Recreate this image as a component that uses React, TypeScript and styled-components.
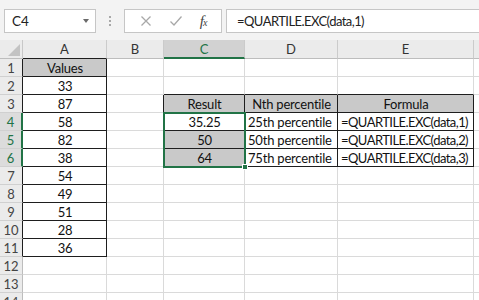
import React from "react";
import styled, { createGlobalStyle, css } from "styled-components";

const GREEN = "#217346";
const GRID = "#dadada";
const DARK = "#1e1e1e";
const FILL = "#c9c9c9";

const GlobalStyle = createGlobalStyle`
  html, body { margin: 0; padding: 0; background: #fff; overflow: hidden; }
  body { font-family: Lato, "Liberation Sans", Arial, sans-serif; }
  * { box-sizing: border-box; }
`;

const Page = styled.div`
  width: 479px;
  height: 300px;
  display: flex;
  flex-direction: column;
  overflow: hidden;
`;

const Toolbar = styled.div`
  height: 40px;
  flex: none;
  background: #f3f3f3;
  display: flex;
  align-items: flex-start;
  padding: 9px 0 0 4px;
`;

const Box = styled.div`
  height: 24px;
  background: #fff;
  border: 1px solid #c6c6c6;
  display: flex;
  align-items: center;
`;

const NameBox = styled(Box)`
  width: 92px;
  padding: 0 6px 0 7px;
  justify-content: space-between;
  font-size: 13.5px;
  color: #222;
`;

const Caret = styled.span`
  width: 0;
  height: 0;
  border-left: 3.5px solid transparent;
  border-right: 3.5px solid transparent;
  border-top: 4px solid #6a6a6a;
`;

const Separator = styled.div`
  width: 28px;
  height: 24px;
  display: flex;
  flex-direction: column;
  align-items: center;
  justify-content: center;
  gap: 2px;
`;

const Dot = styled.span`
  width: 2px;
  height: 2px;
  background: #a8a8a8;
`;

const FxButtons = styled(Box)`
  width: 98px;
  justify-content: space-around;
  padding: 0 6px;
`;

const FxLabel = styled.span`
  font-family: "Liberation Serif", "Times New Roman", serif;
  font-style: italic;
  font-size: 15px;
  color: #444;
  letter-spacing: -1px;
  small { font-size: 10px; }
`;

const FormulaInput = styled(Box)`
  flex: 1;
  margin-left: 4px;
  border-right: none;
  padding-left: 10px;
  font-size: 13px;
  letter-spacing: -0.55px;
  color: #222;
`;

const Sheet = styled.div`
  display: grid;
  grid-template-columns: 23px 84px 57px 81px 93px 136px 64px;
  grid-template-rows: 19px repeat(14, 18px);
  font-size: 13px;
`;

const Corner = styled.div`
  grid-row: 1;
  grid-column: 1;
  background: #ebebeb;
  border-right: 1px solid #c8c8c8;
  border-bottom: 1px solid #bdbdbd;
  position: relative;
  &::after {
    content: "";
    position: absolute;
    right: 2px;
    bottom: 2px;
    width: 0;
    height: 0;
    border-left: 12px solid transparent;
    border-bottom: 12px solid #c3c3c3;
  }
`;

const ColHead = styled.div<{ $c: number; $sel?: boolean; $dark?: boolean }>`
  grid-row: 1;
  grid-column: ${(p) => p.$c + 1};
  background: #ebebeb;
  color: #333;
  display: flex;
  align-items: center;
  justify-content: center;
  border-right: 1px solid #cbcbcb;
  border-bottom: 1px solid ${(p) => (p.$dark ? DARK : "#bdbdbd")};
  ${(p) =>
    p.$sel &&
    css`
      background: #d2d2d2;
      color: ${GREEN};
      border-bottom: 2px solid ${GREEN};
    `}
`;

const RowHead = styled.div<{ $r: number; $sel?: boolean; $dark?: boolean }>`
  grid-row: ${(p) => p.$r + 1};
  grid-column: 1;
  background: #ebebeb;
  color: #444;
  display: flex;
  align-items: center;
  justify-content: center;
  border-bottom: 1px solid #d0d0d0;
  border-right: 1px solid ${(p) => (p.$dark ? DARK : "#bdbdbd")};
  ${(p) =>
    p.$sel &&
    css`
      background: #dcdcdc;
      color: ${GREEN};
      border-right: 2px solid ${GREEN};
    `}
`;

const Cell = styled.div<{
  $r: number;
  $c: number;
  $fill?: boolean;
  $align: "left" | "center";
  $condensed?: boolean;
  $rightDark: boolean;
  $bottomDark: boolean;
}>`
  grid-row: ${(p) => p.$r + 1};
  grid-column: ${(p) => p.$c + 1};
  background: ${(p) => (p.$fill ? FILL : "#fff")};
  color: #111;
  line-height: 17px;
  white-space: nowrap;
  overflow: hidden;
  letter-spacing: ${(p) => (p.$condensed ? "-0.55px" : "-0.2px")};
  text-align: ${(p) => p.$align};
  padding: 1px 2px 0 3px;
  border-right: 1px solid ${(p) => (p.$rightDark ? DARK : GRID)};
  border-bottom: 1px solid ${(p) => (p.$bottomDark ? DARK : GRID)};
`;

const Selection = styled.div`
  grid-row: 5 / 8;
  grid-column: 4 / 5;
  margin: -1px -1px -1px -1px;
  border: 2px solid ${GREEN};
  position: relative;
  z-index: 2;
  pointer-events: none;
`;

const FillHandle = styled.span`
  position: absolute;
  right: -4px;
  bottom: -4px;
  width: 6px;
  height: 6px;
  background: ${GREEN};
  border: 1px solid #fff;
`;

type CellData = { v: string; fill?: boolean; align?: "left" | "center"; condensed?: boolean };

const values = [33, 87, 58, 82, 38, 54, 49, 51, 28, 36];

const cells: Record<string, CellData> = {
  "1,1": { v: "Values", fill: true },
  "3,3": { v: "Result", fill: true },
  "3,4": { v: "Nth percentile", fill: true },
  "3,5": { v: "Formula", fill: true },
  "4,3": { v: "35.25" },
  "5,3": { v: "50", fill: true },
  "6,3": { v: "64", fill: true },
  "4,4": { v: "25th percentile", align: "left" },
  "5,4": { v: "50th percentile", align: "left" },
  "6,4": { v: "75th percentile", align: "left" },
  "4,5": { v: "=QUARTILE.EXC(data,1)", align: "left", condensed: true },
  "5,5": { v: "=QUARTILE.EXC(data,2)", align: "left", condensed: true },
  "6,5": { v: "=QUARTILE.EXC(data,3)", align: "left", condensed: true },
};
values.forEach((v, i) => {
  cells[`${i + 2},1`] = { v: String(v) };
});

const bordered = (r: number, c: number) =>
  (c === 1 && r >= 1 && r <= 11) || (c >= 3 && c <= 5 && r >= 3 && r <= 6);

const COLS = ["A", "B", "C", "D", "E", "F"];
const ROWS = Array.from({ length: 14 }, (_, i) => i + 1);

export default function App() {
  return (
    <Page>
      <GlobalStyle />
      <Toolbar>
        <NameBox>
          <span>C4</span>
          <Caret />
        </NameBox>
        <Separator>
          <Dot />
          <Dot />
          <Dot />
        </Separator>
        <FxButtons>
          <svg width="12" height="12" viewBox="0 0 12 12">
            <path d="M1.5 1.5 L10.5 10.5 M10.5 1.5 L1.5 10.5" stroke="#a8a8a8" strokeWidth="1.3" fill="none" />
          </svg>
          <svg width="14" height="12" viewBox="0 0 14 12">
            <path d="M1.5 6.5 L5 10 L12.5 1.5" stroke="#a8a8a8" strokeWidth="1.3" fill="none" />
          </svg>
          <FxLabel>
            f<small>x</small>
          </FxLabel>
        </FxButtons>
        <FormulaInput>=QUARTILE.EXC(data,1)</FormulaInput>
      </Toolbar>
      <Sheet>
        <Corner />
        {COLS.map((name, i) => (
          <ColHead key={name} $c={i + 1} $sel={name === "C"} $dark={bordered(1, i + 1)}>
            {name}
          </ColHead>
        ))}
        {ROWS.map((r) => (
          <RowHead key={`rh${r}`} $r={r} $sel={r >= 4 && r <= 6} $dark={bordered(r, 1)}>
            {r}
          </RowHead>
        ))}
        {ROWS.map((r) =>
          COLS.map((_, ci) => {
            const c = ci + 1;
            const d = cells[`${r},${c}`];
            return (
              <Cell
                key={`${r},${c}`}
                $r={r}
                $c={c}
                $fill={d?.fill}
                $align={d?.align ?? "center"}
                $condensed={d?.condensed}
                $rightDark={bordered(r, c) || bordered(r, c + 1)}
                $bottomDark={bordered(r, c) || bordered(r + 1, c)}
              >
                {d?.v ?? ""}
              </Cell>
            );
          })
        )}
        <Selection>
          <FillHandle />
        </Selection>
      </Sheet>
    </Page>
  );
}
